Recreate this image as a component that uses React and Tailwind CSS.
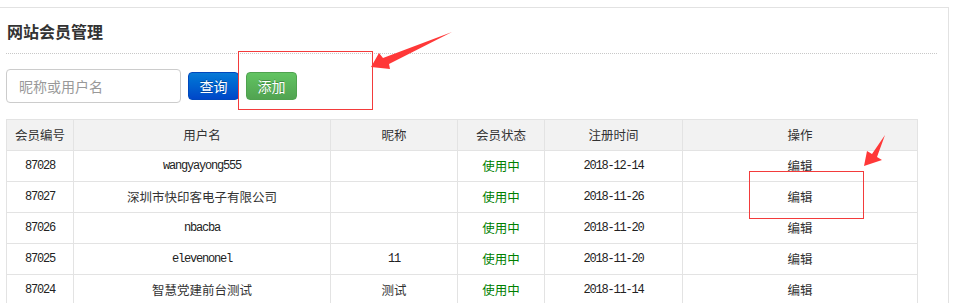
const rows = [
  { id: '87028', name: 'wangyayong555', nick: '', date: '2018-12-14' },
  { id: '87027', name: '深圳市快印客电子有限公司', nick: '', date: '2018-11-26' },
  { id: '87026', name: 'nbacba', nick: '', date: '2018-11-20' },
  { id: '87025', name: 'elevenonel', nick: '11', date: '2018-11-20' },
  { id: '87024', name: '智慧党建前台测试', nick: '测试', date: '2018-11-14' },
];

const isLatin = (s) => /^[\x00-\x7f]*$/.test(s);

const mono = "font-['Liberation_Mono','Noto_Sans_CJK_SC',monospace] text-[12px] tracking-[-1.2px] text-[#222]";
const cols = 'grid grid-cols-[67px_257px_127px_87px_138px_235px]';
const cell = 'h-[31px] border-r border-b border-[#e3e3e3] flex items-center justify-center';

function Text({ value }) {
  if (!value) return null;
  return <span className={isLatin(value) ? mono : 'text-[12.5px]'}>{value}</span>;
}

export default function App() {
  return (
    <div className="relative w-[977px] h-[303px] overflow-hidden bg-white text-[#333] font-['Noto_Sans_CJK_SC','Noto_Sans',sans-serif]">
      <div className="mt-[7px] w-[949px] border-t border-r border-[#e2e2e2] pl-[6px] pb-10">
        {/* Title */}
        <div className="w-[931px] h-[46px] border-b border-dotted border-[#c8c8c8] flex items-center">
          <h2 className="pl-px text-[16px] font-semibold leading-none text-[#333]">网站会员管理</h2>
        </div>

        {/* Search bar */}
        <div className="mt-[15px] flex items-center gap-[7px]">
          <input
            className="w-[175px] h-[34px] border border-[#ccc] rounded-[4px] px-[12px] text-[14px] outline-none placeholder:text-[#999]"
            placeholder="昵称或用户名"
          />
          <button className="w-[51px] h-[28px] rounded-[4px] text-[14px] text-white bg-gradient-to-b from-[#0a7ad6] to-[#0046c8] border border-[#0048bd] [text-shadow:0_-1px_0_rgba(0,0,0,0.25)]">
            查询
          </button>
          <button className="w-[51px] h-[28px] rounded-[4px] text-[14px] text-white bg-gradient-to-b from-[#62c462] to-[#51a351] border border-[#4fa24f] [text-shadow:0_-1px_0_rgba(0,0,0,0.25)]">
            添加
          </button>
        </div>

        {/* Table */}
        <div className="mt-[16px] w-[912px] border-l border-t border-[#e3e3e3]">
          <div className={`${cols} bg-[#f2f2f2] text-[12.5px]`}>
            {['会员编号', '用户名', '昵称', '会员状态', '注册时间', '操作'].map((h) => (
              <div key={h} className={cell}>{h}</div>
            ))}
          </div>
          {rows.map((r) => (
            <div key={r.id} className={cols}>
              <div className={cell}><Text value={r.id} /></div>
              <div className={cell}><Text value={r.name} /></div>
              <div className={cell}><Text value={r.nick} /></div>
              <div className={`${cell} text-[12.5px] text-[#008000]`}>使用中</div>
              <div className={cell}><Text value={r.date} /></div>
              <div className={`${cell} text-[12.5px]`}>编辑</div>
            </div>
          ))}
        </div>
      </div>

      {/* Annotations */}
      <div className="absolute left-[238px] top-[51px] w-[135px] h-[59px] border border-[#f33b3b]" />
      <div className="absolute left-[749px] top-[171px] w-[115px] h-[48px] border border-[#f33b3b]" />
      <svg className="absolute left-0 top-0 pointer-events-none" width="977" height="303">
        <polygon points="371,67 379,53 383,58 452,32 389,64 390,69" fill="#ff3838" />
        <polygon points="864,166 867,151 872,154 885,135 877,157 882,160" fill="#ff3838" />
      </svg>
    </div>
  );
}
